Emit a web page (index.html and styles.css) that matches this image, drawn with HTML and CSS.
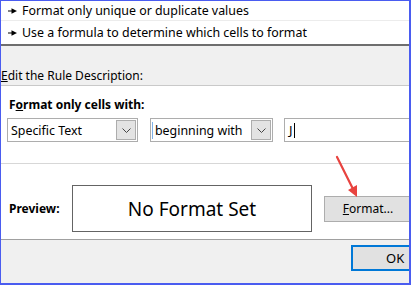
FILE: index.html
```html
<!DOCTYPE html>
<html lang="en">
  <head>
    <meta charset="UTF-8" />
    <meta name="viewport" content="width=device-width, initial-scale=1.0" />
    <title>New Formatting Rule</title>
    <link rel="stylesheet" href="styles.css">
  </head>
  <body>
    <div class="dialog">
      <ul class="rule-types">
        <li>
          <svg class="bullet" width="9" height="6" viewBox="0 0 9 6"><path d="M0 2.5h4v1H0z M3.5 0.3l5.5 2.7-5.5 2.7z" fill="#000"/></svg>
          Format only unique or duplicate values
        </li>
        <li>
          <svg class="bullet" width="9" height="6" viewBox="0 0 9 6"><path d="M0 2.5h4v1H0z M3.5 0.3l5.5 2.7-5.5 2.7z" fill="#000"/></svg>
          Use a formula to determine which cells to format
        </li>
      </ul>

      <div class="desc-label"><u>E</u>dit the Rule Description:</div>

      <div class="rule-panel">
        <div class="panel-title">F<u>o</u>rmat only cells with:</div>
        <div class="criteria">
          <div class="combo combo-type">
            <span class="combo-text">Specific Text</span>
            <span class="combo-btn"><svg width="9" height="5" viewBox="0 0 9 5"><polyline points="0.5,0.5 4.5,4.5 8.5,0.5" fill="none" stroke="#444" stroke-width="1"/></svg></span>
          </div>
          <div class="combo combo-op">
            <span class="combo-text caret-left">beginning with</span>
            <span class="combo-btn"><svg width="9" height="5" viewBox="0 0 9 5"><polyline points="0.5,0.5 4.5,4.5 8.5,0.5" fill="none" stroke="#444" stroke-width="1"/></svg></span>
          </div>
          <div class="text-box">J<span class="caret"></span></div>
        </div>

        <div class="preview-area">
          <div class="preview-row">
            <span class="preview-label">Preview:</span>
            <div class="preview-box">No Format Set</div>
            <button class="btn format-btn" type="button"><u>F</u>ormat...</button>
          </div>
        </div>
      </div>

      <div class="footer">
        <button class="btn ok-btn" type="button">OK</button>
      </div>

      <!-- annotation arrow pointing at the Format button -->
      <svg class="callout" width="411" height="285" viewBox="0 0 411 285">
        <line x1="337" y1="157" x2="353" y2="189" stroke="#e8433f" stroke-width="2.2" stroke-linecap="round"/>
        <polygon points="357,197 348,190 357,185" fill="#e8433f"/>
      </svg>
    </div>
  </body>
</html>
```

FILE: styles.css
```css
* {
  box-sizing: border-box;
}
body {
  margin: 0;
  background: #fff;
  font-family: "Noto Sans", "Open Sans", sans-serif;
  font-size: 12px;
  color: #000;
}
.dialog {
  position: relative;
  width: 411px;
  height: 285px;
  border-style: solid;
  border-color: #4a5cf0;
  border-width: 1px 2px 2px 1px;
  background: #f0f0f0;
  overflow: hidden;
}
.rule-types {
  list-style: none;
  margin: 0;
  padding: 0;
  background: #fff;
  border-bottom: 2px solid #6e6e6e;
  font-size: 12.4px;
}
.rule-types li {
  line-height: 20px;
  padding-left: 7px;
  display: flex;
  align-items: center;
  gap: 5px;
  white-space: nowrap;
}
.rule-types li:first-child {
  height: 20px;
  border-bottom: 1px solid #ececec;
}
.rule-types li:last-child {
  height: 23px;
}
.bullet {
  flex: none;
}
.desc-label {
  height: 40px;
  padding-top: 20px;
  line-height: 20px;
  border-bottom: 1px solid #c9c9c9;
}
.rule-panel {
  background: #fff;
  height: 154px;
  border-bottom: 1px solid #a0a0a0;
  padding: 10px 0 0 8px;
}
.panel-title {
  font-weight: bold;
  line-height: 18px;
  height: 22px;
}
.criteria {
  display: flex;
  height: 24px;
  margin-left: -2px;
}
.combo {
  flex: none;
  display: flex;
  align-items: center;
  justify-content: space-between;
  height: 24px;
  border: 1px solid #adadad;
  background: #fff;
  padding: 0 1px 0 3px;
  font-size: 12.4px;
}
.combo-type {
  width: 131px;
}
.combo-op {
  width: 123px;
  margin-left: 12px;
  padding-left: 1px;
}
.combo-text {
  white-space: nowrap;
}
.caret-left {
  border-left: 1px solid #7fb2e8;
  padding-left: 2px;
}
.combo-btn {
  width: 20px;
  height: 20px;
  background: #e3e3e3;
  border: 1px solid #adadad;
  display: flex;
  align-items: center;
  justify-content: center;
}
.text-box {
  flex: 1;
  height: 24px;
  margin: 0 -20px 0 11px;
  border: 1px solid #adadad;
  padding-left: 4px;
  display: flex;
  align-items: center;
  font-size: 13px;
}
.caret {
  display: inline-block;
  width: 1px;
  height: 15px;
  background: #000;
  margin-left: 1px;
}
.preview-area {
  margin: 21px 0 0 -8px;
  border-top: 1px solid #d7d7d7;
  padding: 21px 0 0 8px;
}
.preview-row {
  display: flex;
  align-items: center;
  height: 47px;
}
.preview-label {
  flex: none;
  font-weight: bold;
  width: 63px;
}
.preview-box {
  flex: none;
  width: 240px;
  height: 47px;
  border: 1px solid #646464;
  display: flex;
  align-items: center;
  justify-content: center;
  font-size: 19px;
}
.btn {
  font-family: inherit;
  font-size: 12px;
  color: #000;
  background: #e1e1e1;
  border: 1px solid #adadad;
  padding: 0;
}
.format-btn {
  margin-left: 12px;
  width: 88px;
  height: 26px;
  flex: none;
}
.footer {
  padding: 5px 0 0 350px;
}
.ok-btn {
  width: 80px;
  height: 26px;
  border: 2px solid #0078d7;
  text-align: left;
  padding-left: 33px;
  font-size: 13px;
}
.callout {
  position: absolute;
  left: -1px;
  top: -1px;
  pointer-events: none;
}
```
